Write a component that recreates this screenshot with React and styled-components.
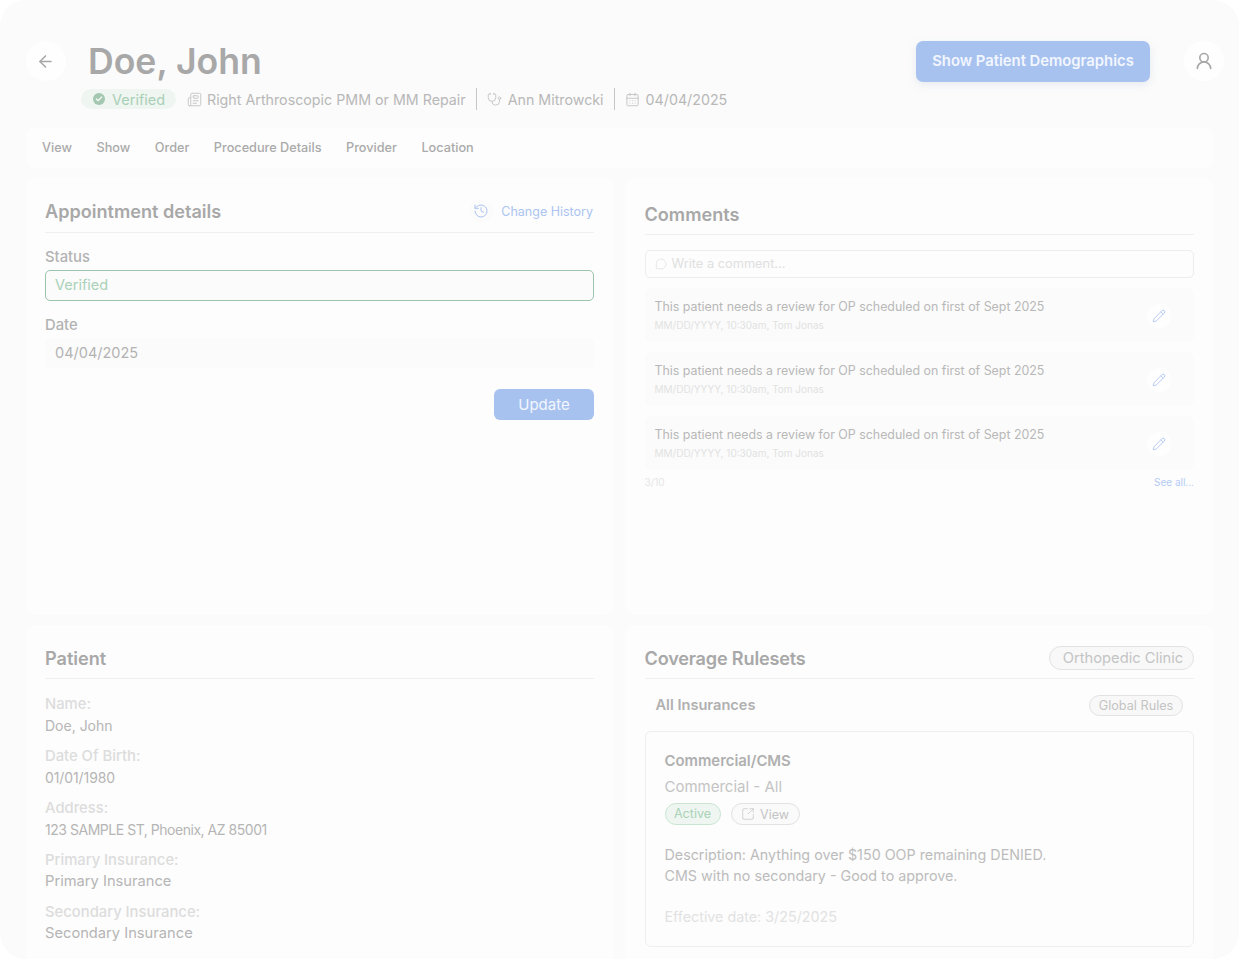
import React from 'react';
import styled, { createGlobalStyle } from 'styled-components';
import {
  ArrowLeft,
  CalendarDays,
  Check,
  History,
  MessageCircle,
  Newspaper,
  Pencil,
  SquareArrowOutUpRight,
  Stethoscope,
  UserRound,
} from 'lucide-react';

const GlobalStyle = createGlobalStyle`
  html, body {
    margin: 0;
    height: 100%;
    background: #ffffff;
    font-family: Inter, "Open Sans", sans-serif;
  }
`;

const comments = [1, 2, 3];

const patientFields = [
  ['Name:', 'Doe, John', 0],
  ['Date Of Birth:', '01/01/1980', -0.1],
  ['Address:', '123 SAMPLE ST, Phoenix, AZ 85001', -0.47],
  ['Primary Insurance:', 'Primary Insurance'],
  ['Secondary Insurance:', 'Secondary Insurance'],
];

const App = () => (
  <Shell>
    <GlobalStyle />
    <Header>
      <RoundButton><ArrowLeft size={19} strokeWidth={2} /></RoundButton>
      <Title>Doe, John</Title>
      <DemographicsButton>Show Patient Demographics</DemographicsButton>
      <RoundButton><UserRound size={20} strokeWidth={2} /></RoundButton>
    </Header>

    <SubLine>
      <VerifiedBadge>
        <CheckDot><Check size={8} strokeWidth={4} /></CheckDot>
        Verified
      </VerifiedBadge>
      <Meta $gap={5}>
        <Newspaper size={15} strokeWidth={1.5} />
        Right Arthroscopic PMM or MM Repair
      </Meta>
      <Divider />
      <Meta $gap={6}>
        <Stethoscope size={15} strokeWidth={1.5} />
        Ann Mitrowcki
      </Meta>
      <Divider />
      <Meta $gap={6}>
        <CalendarDays size={15} strokeWidth={1.5} />
        04/04/2025
      </Meta>
    </SubLine>

    <Nav>
      {['View', 'Show', 'Order', 'Procedure Details', 'Provider', 'Location'].map((item) => (
        <NavItem key={item}>{item}</NavItem>
      ))}
    </Nav>

    <Grid>
      <Card>
        <CardHead $height={34} $pad={8}>
          <CardTitle>Appointment details</CardTitle>
          <HistoryLink>
            <HistoryIcon><History size={16} strokeWidth={1.5} /></HistoryIcon>
            Change History
          </HistoryLink>
        </CardHead>
        <FieldLabel>Status</FieldLabel>
        <StatusField>Verified</StatusField>
        <FieldLabel>Date</FieldLabel>
        <DateField>04/04/2025</DateField>
        <UpdateRow><UpdateButton>Update</UpdateButton></UpdateRow>
      </Card>

      <Card>
        <CardHead $height={36} $pad={4}>
          <CardTitle>Comments</CardTitle>
        </CardHead>
        <CommentInput>
          <MessageCircle size={12} strokeWidth={1.5} />
          Write a comment...
        </CommentInput>
        <CommentList>
          {comments.map((id) => (
            <CommentRow key={id}>
              <CommentBody>
                <CommentText>This patient needs a review for OP scheduled on first of Sept 2025</CommentText>
                <CommentMeta>MM/DD/YYYY, 10:30am, Tom Jonas</CommentMeta>
              </CommentBody>
              <EditButton><Pencil size={14} strokeWidth={1.5} /></EditButton>
            </CommentRow>
          ))}
        </CommentList>
        <CommentFooter>
          <span>3/10</span>
          <SeeAll>See all...</SeeAll>
        </CommentFooter>
      </Card>

      <Card>
        <CardHead $height={33} $pad={7}>
          <CardTitle>Patient</CardTitle>
        </CardHead>
        <PatientList>
          {patientFields.map(([label, value, tracking]) => (
            <div key={label}>
              <PatientLabel>{label}</PatientLabel>
              <PatientValue $tracking={tracking}>{value}</PatientValue>
            </div>
          ))}
        </PatientList>
      </Card>

      <Card>
        <CardHead $height={33} $pad={7}>
          <CoverageTitle>Coverage Rulesets</CoverageTitle>
          <ClinicPill>Orthopedic Clinic</ClinicPill>
        </CardHead>
        <InsuranceRow>
          <InsuranceTitle>All Insurances</InsuranceTitle>
          <GlobalPill>Global Rules</GlobalPill>
        </InsuranceRow>
        <RuleCard>
          <RuleTitle>Commercial/CMS</RuleTitle>
          <RuleSubtitle>Commercial - All</RuleSubtitle>
          <RuleTags>
            <ActiveTag>Active</ActiveTag>
            <ViewTag>
              <SquareArrowOutUpRight size={14} strokeWidth={1.25} />
              View
            </ViewTag>
          </RuleTags>
          <RuleText>
            Description: Anything over $150 OOP remaining DENIED.
            <br />
            CMS with no secondary - Good to approve.
          </RuleText>
          <RuleDate>Effective date: 3/25/2025</RuleDate>
        </RuleCard>
      </Card>
    </Grid>
  </Shell>
);

export default App;

const Shell = styled.div`
  box-sizing: border-box;
  height: 959px;
  overflow: hidden;
  padding: 41px 26px 0;
  background: #fbfbfb;
  border-radius: 26px;
`;
const Header = styled.div`
  display: flex;
  align-items: center;
  height: 40px;
  margin-right: -11px;
`;
const RoundButton = styled.div`
  display: flex;
  flex: none;
  align-items: center;
  justify-content: center;
  box-sizing: border-box;
  width: 40px;
  height: 40px;
  padding-right: 1px;
  border-radius: 50%;
  background: #fefefe;
  color: #a8a8a8;
`;
const Title = styled.h1`
  flex: 1;
  margin: 2px 0 0 22px;
  font-size: 35.6px;
  font-weight: 600;
  line-height: 40px;
  color: #a8a8a8;
`;
const DemographicsButton = styled.button`
  width: 234px;
  height: 41px;
  margin-right: 34px;
  padding: 0 0 1px;
  border: 0;
  border-radius: 7px;
  background: #a8c2f0;
  box-shadow: 0 3px 8px rgba(120, 140, 180, 0.15);
  font: 600 14.8px Inter, sans-serif;
  color: #f2f6fe;
`;
const SubLine = styled.div`
  display: flex;
  align-items: center;
  height: 22px;
  margin: 7px 0 0 55px;
`;
const VerifiedBadge = styled.div`
  display: flex;
  align-items: center;
  gap: 7px;
  width: 95px;
  height: 20px;
  margin-right: 11px;
  padding-left: 12px;
  box-sizing: border-box;
  border-radius: 10px;
  background: #eff6f1;
  font-size: 14.5px;
  color: #a9cfb6;
`;
const CheckDot = styled.span`
  display: flex;
  align-items: center;
  justify-content: center;
  width: 12px;
  height: 12px;
  border-radius: 50%;
  background: #a3c7b0;
  color: #f4f9f6;
`;
const Meta = styled.div`
  display: flex;
  align-items: center;
  gap: ${(p) => p.$gap}px;
  font-size: 14.25px;
  color: #b8b8b8;
  white-space: nowrap;
  svg { color: #c4c4c4; }
`;
const Divider = styled.span`
  width: 1px;
  height: 22px;
  margin: 0 10px;
  background: #c6c6c6;
`;
const Nav = styled.nav`
  display: flex;
  align-items: center;
  gap: 24.5px;
  box-sizing: border-box;
  height: 40px;
  margin-top: 18px;
  padding: 0 0 2px 16px;
  border-radius: 8px;
  background: #fdfdfd;
`;
const NavItem = styled.span`
  font-size: 12.7px;
  font-weight: 500;
  color: #aaaaaa;
`;
const Grid = styled.div`
  display: grid;
  grid-template-columns: 588px 588px;
  grid-template-rows: 437px 400px;
  column-gap: 11px;
  row-gap: 10px;
  margin-top: 10px;
`;
const Card = styled.section`
  box-sizing: border-box;
  padding: 20px 20px 0 19px;
  border-radius: 10px;
  background: #fdfdfd;
  &:nth-child(even) {
    padding: 20px 19px 0 19.5px;
  }
`;
const CardHead = styled.div`
  display: flex;
  align-items: center;
  justify-content: space-between;
  box-sizing: border-box;
  height: ${(p) => p.$height + 1}px;
  padding-bottom: ${(p) => p.$pad}px;
  border-bottom: 1px solid #f0f0f0;
`;
const CardTitle = styled.h2`
  margin: 0;
  font-size: 18.1px;
  font-weight: 600;
  color: #a8a8a8;
`;
const CoverageTitle = styled(CardTitle)`
  letter-spacing: -0.18px;
`;
const HistoryLink = styled.div`
  display: flex;
  align-items: center;
  gap: 8px;
  padding-right: 1px;
  font-size: 12.5px;
  color: #abc4f1;
`;
const HistoryIcon = styled.span`
  display: flex;
  align-items: center;
  justify-content: center;
  width: 24px;
  height: 24px;
  border-radius: 50%;
  background: #fbfbfb;
`;
const FieldLabel = styled.label`
  display: block;
  margin-top: 14px;
  margin-bottom: 3px;
  font-size: 14.8px;
  font-weight: 500;
  line-height: 20px;
  color: #b3b3b3;
`;
const StatusField = styled.div`
  box-sizing: border-box;
  height: 31px;
  padding-left: 9px;
  border: 1px solid #9cc4ab;
  border-radius: 5px;
  background: #fbfbfb;
  font-size: 14.5px;
  line-height: 27px;
  color: #a9d2b8;
`;
const DateField = styled.div`
  box-sizing: border-box;
  height: 30px;
  padding-left: 10px;
  border-radius: 5px;
  background: #fbfbfb;
  font-size: 14.5px;
  line-height: 30px;
  color: #b3b3b3;
`;
const UpdateRow = styled.div`
  display: flex;
  justify-content: flex-end;
  margin-top: 21px;
`;
const UpdateButton = styled.button`
  width: 100px;
  height: 31px;
  border: 0;
  border-radius: 6px;
  background: #a8c2f0;
  font: 400 15px Inter, sans-serif;
  color: #f2f6fe;
`;
const CommentInput = styled.div`
  display: flex;
  align-items: center;
  gap: 5px;
  box-sizing: border-box;
  height: 28px;
  margin-top: 15px;
  padding: 0 0 1px 9px;
  border: 1px solid #ececec;
  border-radius: 5px;
  font-size: 12.8px;
  color: #e0e0e0;
`;
const CommentList = styled.div`
  display: flex;
  flex-direction: column;
  gap: 10px;
  margin-top: 10px;
`;
const CommentRow = styled.div`
  display: flex;
  align-items: center;
  justify-content: space-between;
  box-sizing: border-box;
  height: 54px;
  padding: 0 23px 0 10px;
  border-radius: 6px;
  background: #fbfbfb;
`;
const CommentBody = styled.div`
  margin-top: 1px;
`;
const CommentText = styled.div`
  font-size: 12.4px;
  line-height: 18px;
  color: #b8b8b8;
`;
const CommentMeta = styled.div`
  font-size: 10px;
  line-height: 18px;
  color: #e2e2e2;
`;
const EditButton = styled.span`
  display: flex;
  align-items: center;
  justify-content: center;
  width: 24px;
  height: 24px;
  margin-top: 2px;
  border-radius: 50%;
  background: #fefefe;
  color: #abc4f1;
`;
const CommentFooter = styled.div`
  display: flex;
  justify-content: space-between;
  margin-top: 6px;
  font-size: 10px;
  line-height: 12px;
  color: #e6e6e6;
`;
const SeeAll = styled.span`
  color: #b4cbf3;
`;
const PatientList = styled.div`
  display: flex;
  flex-direction: column;
  gap: 10px;
  margin-top: 15px;
`;
const PatientLabel = styled.div`
  font-size: 14.8px;
  font-weight: 500;
  line-height: 21px;
  color: #dcdcdc;
`;
const PatientValue = styled.div`
  font-size: ${(p) => (p.$tracking === undefined ? '14.7px' : '14px')};
  letter-spacing: ${(p) => p.$tracking || 0}px;
  line-height: 21px;
  color: #b5b5b5;
`;
const ClinicPill = styled.span`
  box-sizing: border-box;
  width: 145px;
  height: 24px;
  padding-left: 3px;
  border: 1px solid #e2e2e2;
  border-radius: 12px;
  background: #f8f8f8;
  font-size: 14.7px;
  line-height: 22px;
  text-align: center;
  color: #c4c4c4;
`;
const InsuranceRow = styled.div`
  display: flex;
  align-items: center;
  justify-content: space-between;
  height: 21px;
  margin-top: 16px;
  padding: 0 11px;
`;
const InsuranceTitle = styled.span`
  padding-bottom: 2px;
  font-size: 14.6px;
  font-weight: 600;
  color: #b0b0b0;
`;
const GlobalPill = styled.span`
  box-sizing: border-box;
  width: 94px;
  height: 21px;
  border: 1px solid #e2e2e2;
  border-radius: 11px;
  background: #f8f8f8;
  font-size: 12.7px;
  line-height: 19px;
  text-align: center;
  color: #c4c4c4;
`;
const RuleCard = styled.div`
  box-sizing: border-box;
  height: 216px;
  margin-top: 15px;
  padding: 19px 19px;
  border: 1px solid #efefef;
  border-radius: 6px;
`;
const RuleTitle = styled.div`
  font-size: 14.9px;
  font-weight: 600;
  line-height: 20px;
  color: #b0b0b0;
`;
const RuleSubtitle = styled.div`
  margin-top: 6px;
  font-size: 15px;
  line-height: 20px;
  color: #c4c4c4;
`;
const RuleTags = styled.div`
  display: flex;
  gap: 10px;
  margin-top: 6px;
`;
const ActiveTag = styled.span`
  box-sizing: border-box;
  width: 56px;
  height: 22px;
  border: 1px solid #c9e6d3;
  border-radius: 11px;
  background: #eff6f1;
  font-size: 12.6px;
  line-height: 20px;
  text-align: center;
  color: #a9d2b8;
`;
const ViewTag = styled.span`
  display: flex;
  align-items: center;
  justify-content: center;
  gap: 5px;
  box-sizing: border-box;
  width: 69px;
  height: 22px;
  border: 1px solid #e2e2e2;
  border-radius: 11px;
  background: #fafafa;
  font-size: 12.5px;
  color: #c4c4c4;
`;
const RuleText = styled.p`
  margin: 19px 0 0;
  font-size: 14.3px;
  line-height: 21px;
  color: #bcbcbc;
`;
const RuleDate = styled.div`
  margin-top: 20px;
  font-size: 14.3px;
  line-height: 21px;
  color: #e2e2e2;
`;
